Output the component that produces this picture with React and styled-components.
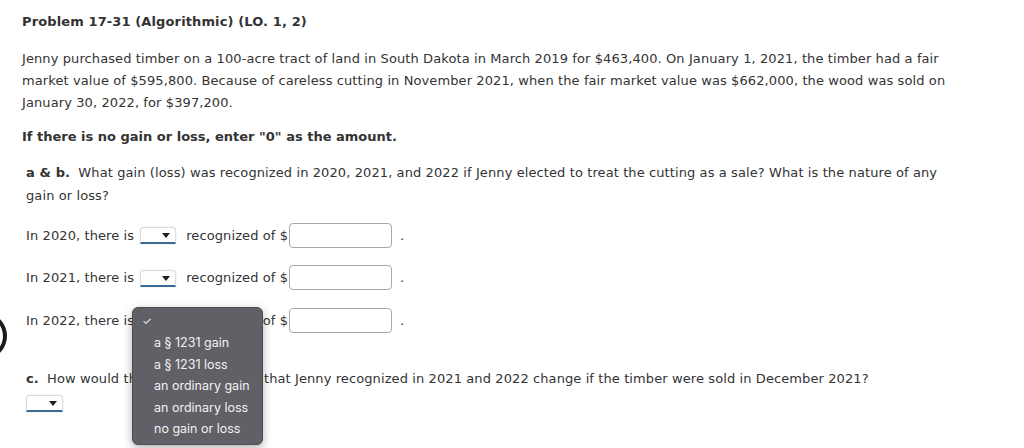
import styled, { createGlobalStyle } from "styled-components";

const GlobalStyle = createGlobalStyle`
  html, body {
    margin: 0;
    padding: 0;
    background: #fff;
  }
  body {
    font-family: "DejaVu Sans", Verdana, sans-serif;
    font-size: 13px;
    letter-spacing: 0.1px;
    color: #333;
  }
`;

const Page = styled.div`
  position: relative;
  width: 1024px;
  height: 448px;
  overflow: hidden;
  box-sizing: border-box;
  padding: 11px 64px 0 22px;
`;

const Title = styled.div`
  font-weight: bold;
  letter-spacing: 0.12px;
  line-height: 22px;
  margin-bottom: 15px;
`;

const Para = styled.p`
  margin: 0 0 12px;
  line-height: 22px;
`;

const Note = styled.p`
  margin: 0 0 13px;
  font-weight: bold;
  letter-spacing: 0;
  line-height: 22px;
`;

const Part = styled.div`
  padding-left: 4px;
`;

const Question = styled.p`
  margin: 0 0 16px;
  line-height: 23px;
`;

const Label = styled.b`
  letter-spacing: 0.12px;
  margin-right: 4px;
`;

const Row = styled.div`
  display: flex;
  align-items: center;
  height: 24px;
  margin-bottom: 18.5px;
`;

const SelectBox = styled.span`
  position: relative;
  display: inline-block;
  box-sizing: border-box;
  width: ${(p) => p.$width || 36}px;
  height: 17px;
  margin: 1px ${(p) => p.$after || 0}px 0 ${(p) => p.$before || 0}px;
  background: #fff;
  border: 1px solid #dcdcdc;
  border-bottom: 2px solid #3b6a96;
  border-radius: 4px 4px 0 0;
  box-shadow: 0 0 2px rgba(0, 0, 0, 0.12);

  &::after {
    content: "";
    position: absolute;
    right: 5px;
    top: 5px;
    border-left: 4px solid transparent;
    border-right: 4px solid transparent;
    border-top: 5px solid #1e1e1e;
  }
`;

const AmountInput = styled.span`
  display: inline-block;
  box-sizing: border-box;
  width: 103px;
  height: 25px;
  margin-left: 1px;
  border: 1px solid #a8a8a8;
  border-radius: 4px;
  background: #fff;
`;

const Dot = styled.span`
  margin-left: 8px;
`;

const PartC = styled.div`
  padding-left: 4px;
  margin-top: 36px;
  line-height: 22px;
`;

const AnswerLine = styled.div`
  display: flex;
  padding-top: 4px;
`;

const Menu = styled.ul`
  position: absolute;
  left: 132px;
  top: 307px;
  width: 131px;
  margin: 0;
  padding: 3px 0 5px;
  list-style: none;
  box-sizing: border-box;
  background: #616066;
  border: 1px solid #4d4c51;
  border-radius: 6px;
  box-shadow: 0 3px 10px rgba(0, 0, 0, 0.3);
  font-family: Inter, "Liberation Sans", sans-serif;
  font-size: 12.5px;
  letter-spacing: 0;
  color: #f2f2f2;
`;

const MenuItem = styled.li`
  position: relative;
  height: 21.4px;
  line-height: 21.4px;
  padding-left: 21px;
`;

const Check = styled.span`
  position: absolute;
  left: 9px;
  top: 0;
  font-size: 11px;
`;

const EdgeRing = styled.div`
  position: absolute;
  left: -37px;
  top: 313px;
  width: 36px;
  height: 38px;
  border: 4px solid #1a1a1a;
  border-radius: 50%;
`;

const options = [
  "a § 1231 gain",
  "a § 1231 loss",
  "an ordinary gain",
  "an ordinary loss",
  "no gain or loss",
];

const YearRow = ({ year }) => (
  <Row>
    In {year}, there is
    <SelectBox $before={6} $after={10} />
    recognized of $
    <AmountInput />
    <Dot>.</Dot>
  </Row>
);

export default function App() {
  return (
    <>
      <GlobalStyle />
      <Page>
        <Title>Problem 17-31 (Algorithmic) (LO. 1, 2)</Title>
        <Para>
          Jenny purchased timber on a 100-acre tract of land in South Dakota in
          March 2019 for $463,400. On January 1, 2021, the timber had a fair
          market value of $595,800. Because of careless cutting in November
          2021, when the fair market value was $662,000, the wood was sold on
          January 30, 2022, for $397,200.
        </Para>
        <Note>If there is no gain or loss, enter "0" as the amount.</Note>
        <Part>
          <Question>
            <Label>a &amp; b.</Label> What gain (loss) was recognized in 2020,
            2021, and 2022 if Jenny elected to treat the cutting as a sale? What
            is the nature of any gain or loss?
          </Question>
          <YearRow year="2020" />
          <YearRow year="2021" />
          <YearRow year="2022" />
        </Part>
        <PartC>
          <Label>c.</Label> How would the total gain or loss that Jenny
          recognized in 2021 and 2022 change if the timber were sold in December
          2021?
          <AnswerLine>
            <SelectBox $width={37} />
          </AnswerLine>
        </PartC>
        <Menu>
          <MenuItem>
            <Check>✓</Check>
          </MenuItem>
          {options.map((o) => (
            <MenuItem key={o}>{o}</MenuItem>
          ))}
        </Menu>
        <EdgeRing />
      </Page>
    </>
  );
}
